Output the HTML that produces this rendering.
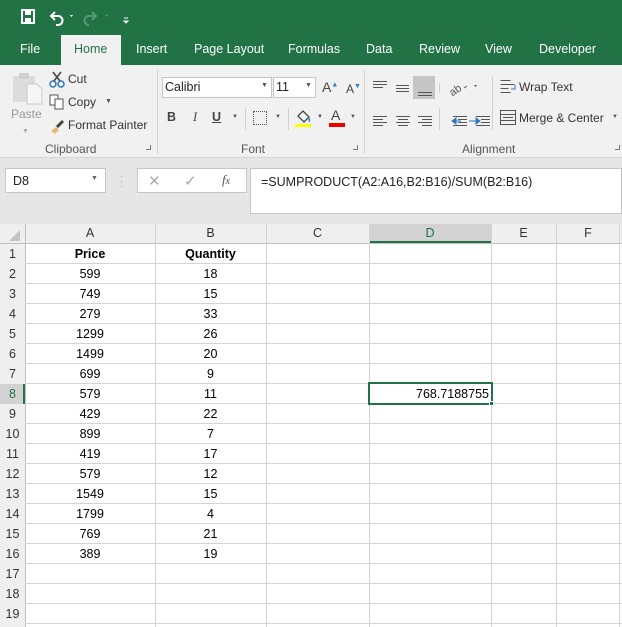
<!DOCTYPE html>
<html><head><style>
*{margin:0;padding:0;box-sizing:border-box}
body{width:622px;height:627px;overflow:hidden;background:#fff;font-family:"Liberation Sans",sans-serif;position:relative;font-size:12px;color:#222}
.a{position:absolute}
.tab{position:absolute;top:42px;color:#fff;font-size:12.5px}
.rb{color:#333;font-size:12px}
.grp{position:absolute;top:142px;font-size:12px;color:#555}
.vs{position:absolute;top:70px;width:1px;height:84px;background:#d6d6d6}
.cell{position:absolute;height:20px;line-height:20px;text-align:center;font-family:"Liberation Sans",sans-serif;font-size:12.5px;color:#000}
.rh{position:absolute;left:0;width:25px;height:20px;line-height:20px;text-align:center;font-size:12.5px;color:#333;background:#efefef}
.hl{position:absolute;left:0;width:622px;height:1px;background:#d4d4d4}
.vl{position:absolute;top:224px;width:1px;height:403px;background:#d4d4d4}
.ch{position:absolute;top:224px;height:19px;line-height:19px;text-align:center;font-size:12.5px;color:#333;background:#efefef}
</style></head><body>
<div class="a" style="left:0;top:0;width:622px;height:65px;background:#217346"></div>
<svg class="a" style="left:20px;top:8px" width="120" height="20">
<rect x="2" y="2" width="12" height="13" fill="none" stroke="#fff" stroke-width="2"/><rect x="5" y="3" width="6" height="4" fill="#fff"/><rect x="5" y="10" width="6" height="4" fill="#fff"/>
<path d="M35 4 l-4 4 4 4 M31 8 h7 a4.5 4.5 0 0 1 0 9 h-2" fill="none" stroke="#fff" stroke-width="2"/>
<path d="M50 7 l3 0 -1.5 2z" fill="#fff"/>
<path d="M72 4 l4 4 -4 4 M76 8 h-7 a4.5 4.5 0 0 0 0 9" fill="none" stroke="#5a9a76" stroke-width="2"/>
<path d="M85 7 l3 0 -1.5 2z" fill="#5a9a76"/>
<path d="M104 10 h4 M104 13 l2 2 2 -2z" stroke="#fff" fill="#fff"/>
</svg>
<div class="a" style="left:61px;top:35px;width:60px;height:30px;background:#f1f1f1"></div>
<div class="tab" style="left:20px">File</div>
<div class="tab" style="left:74px;color:#217346">Home</div>
<div class="tab" style="left:136px">Insert</div>
<div class="tab" style="left:194px">Page Layout</div>
<div class="tab" style="left:288px">Formulas</div>
<div class="tab" style="left:366px">Data</div>
<div class="tab" style="left:419px">Review</div>
<div class="tab" style="left:485px">View</div>
<div class="tab" style="left:539px">Developer</div>
<div class="a" style="left:0;top:65px;width:622px;height:92px;background:#f1f1f1"></div>
<div class="a" style="left:0;top:157px;width:622px;height:1px;background:#d5d5d5"></div>
<div class="a" style="left:0;top:158px;width:622px;height:66px;background:#e6e6e6"></div>
<svg class="a" style="left:10px;top:72px" width="34" height="34"><rect x="3" y="4" width="22" height="26" fill="#dcdcdc"/><rect x="9" y="1" width="10" height="6" fill="#cfcfcf"/><path d="M17 12 h10 l5 5 v15 h-15z" fill="#f6f6f6" stroke="#c8c8c8"/></svg>
<div class="a rb" style="left:11px;top:107px;color:#999">Paste</div>
<div class="a" style="left:22px;top:128px;color:#aaa;font-size:7px">▼</div>
<svg class="a" style="left:49px;top:71px" width="16" height="66"><circle cx="4" cy="13" r="3" fill="none" stroke="#2b79c0" stroke-width="1.5"/><circle cx="12" cy="13" r="3" fill="none" stroke="#2b79c0" stroke-width="1.5"/><path d="M4 1 L11 10 M12 1 L5 10" stroke="#444" stroke-width="1.5"/><rect x="1" y="24" width="8" height="10" fill="#fff" stroke="#555"/><rect x="6" y="28" width="8" height="10" fill="#fff" stroke="#555"/><path d="M2 60 l5-4 3 3 -4 4z" fill="#e8b86a"/><path d="M8 56 l6-6" stroke="#444" stroke-width="3"/></svg>
<div class="a rb" style="left:68px;top:72px">Cut</div>
<div class="a rb" style="left:68px;top:95px">Copy</div>
<div class="a" style="left:105px;top:98px;font-size:7px;color:#555">▼</div>
<div class="a rb" style="left:68px;top:118px">Format Painter</div>
<div class="grp" style="left:45px">Clipboard</div>
<div class="a" style="left:146px;top:145px;width:5px;height:5px;border-right:1px solid #777;border-bottom:1px solid #777"></div>
<div class="vs" style="left:157px"></div>
<div class="a" style="left:162px;top:77px;width:110px;height:21px;background:#fff;border:1px solid #c6c6c6;font-size:12.5px;padding:2px 2px;line-height:15px">Calibri</div>
<div class="a" style="left:261px;top:82px;font-size:7px;color:#555">▼</div>
<div class="a" style="left:273px;top:77px;width:43px;height:21px;background:#fff;border:1px solid #c6c6c6;font-size:12.5px;padding:2px 2px;line-height:15px">11</div>
<div class="a" style="left:305px;top:82px;font-size:7px;color:#555">▼</div>
<div class="a" style="left:322px;top:79px;font-size:14px;color:#444">A<sup style="font-size:7px;color:#2b79c0">▲</sup></div>
<div class="a" style="left:346px;top:82px;font-size:12px;color:#444">A<sup style="font-size:7px;color:#2b79c0">▼</sup></div>
<div class="a" style="left:167px;top:110px;font-weight:bold;font-size:12.5px;color:#444">B</div>
<div class="a" style="left:193px;top:110px;font-style:italic;font-size:12.5px;color:#444;font-family:'Liberation Serif',serif">I</div>
<div class="a" style="left:212px;top:110px;text-decoration:underline;font-size:12.5px;color:#444;font-weight:bold">U</div>
<div class="a" style="left:232px;top:114px;font-size:6px;color:#555">▼</div>
<div class="a" style="left:245px;top:108px;width:1px;height:22px;background:#d0d0d0"></div>
<div class="a" style="left:253px;top:111px;width:14px;height:14px;border:1px dotted #555"></div>
<div class="a" style="left:275px;top:114px;font-size:6px;color:#555">▼</div>
<div class="a" style="left:288px;top:108px;width:1px;height:22px;background:#d0d0d0"></div>
<svg class="a" style="left:294px;top:108px" width="20" height="20"><path d="M4 8 l5-5 6 6 -5 5z" fill="none" stroke="#444" stroke-width="1.3"/><path d="M14 9 q3 3 1 5" fill="#2b79c0" stroke="#2b79c0"/><rect x="1" y="16" width="16" height="3" fill="#ffff00"/></svg>
<div class="a" style="left:317px;top:114px;font-size:6px;color:#555">▼</div>
<div class="a" style="left:331px;top:107px;font-size:14px;color:#444">A</div>
<div class="a" style="left:329px;top:123px;width:16px;height:4px;background:#e00"></div>
<div class="a" style="left:350px;top:114px;font-size:6px;color:#555">▼</div>
<div class="grp" style="left:241px">Font</div>
<div class="a" style="left:353px;top:145px;width:5px;height:5px;border-right:1px solid #777;border-bottom:1px solid #777"></div>
<div class="vs" style="left:364px"></div>
<div class="a" style="left:413px;top:76px;width:22px;height:23px;background:#c6c6c6"></div>
<svg class="a" style="left:370px;top:76px" width="130" height="60">
<g stroke="#555" stroke-width="1"><path d="M3 5.5h14M3 8.5h14M3 11.5h10"/><path d="M26 9.5h13M26 12.5h13M26 15.5h13"/><path d="M48 16.5h14M48 19.5h14"/>
<path d="M3 40.5h14M3 43.5h10M3 46.5h14M3 49.5h10"/><path d="M26 40.5h14M28 43.5h10M26 46.5h14M28 49.5h10"/><path d="M48 40.5h14M52 43.5h10M48 46.5h14M52 49.5h10"/>
<path d="M83 40.5h14M88 43.5h9M88 46.5h9M83 49.5h14"/><path d="M106 40.5h14M111 43.5h9M111 46.5h9M106 49.5h14"/></g>
<path d="M82 45 l4-3 v6z M86 45h5" fill="#2b79c0" stroke="#2b79c0"/><path d="M110 45 l-4-3 v6z M99 45h7" fill="#2b79c0" stroke="#2b79c0"/>
<text x="78" y="17" font-size="11" fill="#555" transform="rotate(-35 86 12)" font-family="Liberation Sans">ab</text><path d="M94 12 l3-2" stroke="#555"/>
<path d="M104 9 l3 0 -1.5 2z" fill="#555"/>
</svg>
<div class="a" style="left:439px;top:83px;width:1px;height:10px;background:#d0d0d0"></div>
<div class="a" style="left:439px;top:108px;width:1px;height:22px;background:#d0d0d0"></div>
<div class="a" style="left:492px;top:76px;width:1px;height:54px;background:#d0d0d0"></div>
<svg class="a" style="left:499px;top:78px" width="20" height="50"><g stroke="#555" fill="none"><path d="M1.5 2.5h10M1.5 6.5h14M1.5 10.5h8M1.5 14.5h10"/><path d="M16 7 v4 h-4" stroke="#2b79c0"/><rect x="1.5" y="32.5" width="15" height="14"/><path d="M1.5 36.5h15M1.5 42.5h15M4 39.5h10"/></g></svg>
<div class="a rb" style="left:519px;top:80px">Wrap Text</div>
<div class="a rb" style="left:519px;top:111px">Merge &amp; Center</div>
<div class="a" style="left:612px;top:114px;font-size:6px;color:#555">▼</div>
<div class="grp" style="left:462px">Alignment</div>
<div class="a" style="left:615px;top:145px;width:5px;height:5px;border-right:1px solid #777;border-bottom:1px solid #777"></div>
<div class="a" style="left:5px;top:168px;width:101px;height:25px;background:#fff;border:1px solid #c6c6c6;padding:5px 7px;font-size:12.5px">D8</div>
<div class="a" style="left:91px;top:175px;font-size:7px;color:#666">▼</div>
<div class="a" style="left:120px;top:174px;color:#aaa;font-size:10px;line-height:5px">·<br>·<br>·</div>
<div class="a" style="left:137px;top:168px;width:110px;height:25px;background:#fff;border:1px solid #c6c6c6"></div>
<div class="a" style="left:148px;top:172px;color:#aaa;font-size:15px">✕</div>
<div class="a" style="left:184px;top:172px;color:#aaa;font-size:15px">✓</div>
<div class="a" style="left:222px;top:172px;color:#555;font-size:13px;font-style:italic;font-family:'Liberation Serif',serif">f<span style="font-size:10px">x</span></div>
<div class="a" style="left:250px;top:168px;width:372px;height:46px;background:#fff;border:1px solid #c6c6c6;padding:6px 10px;font-size:12.5px;color:#222">=SUMPRODUCT(A2:A16,B2:B16)/SUM(B2:B16)</div>
<div class="a" style="left:0;top:224px;width:622px;height:19px;background:#efefef"></div>
<svg class="a" style="left:6px;top:228px" width="16" height="14"><path d="M14 2 V13 H3z" fill="#c3c3c3"/></svg>
<div class="ch" style="left:25px;width:130px">A</div>
<div class="ch" style="left:155px;width:111px">B</div>
<div class="ch" style="left:266px;width:103px">C</div>
<div class="ch" style="left:369px;width:122px;background:#d2d2d2;color:#217346">D</div>
<div class="ch" style="left:491px;width:65px">E</div>
<div class="ch" style="left:556px;width:64px">F</div>
<div class="a" style="left:369px;top:241px;width:122px;height:2px;background:#217346"></div>
<div class="a" style="left:0;top:243px;width:25px;height:384px;background:#efefef"></div>
<div class="a" style="left:0;top:243px;width:622px;height:1px;background:#c0c0c0"></div>
<div class="a" style="left:25px;top:224px;width:1px;height:403px;background:#c0c0c0"></div>
<div class="vl" style="left:155px"></div><div class="vl" style="left:266px"></div><div class="vl" style="left:369px"></div><div class="vl" style="left:491px"></div><div class="vl" style="left:556px"></div><div class="vl" style="left:619px"></div>
<div class="hl" style="top:263px"></div><div class="hl" style="top:283px"></div><div class="hl" style="top:303px"></div><div class="hl" style="top:323px"></div><div class="hl" style="top:343px"></div><div class="hl" style="top:363px"></div><div class="hl" style="top:383px"></div><div class="hl" style="top:403px"></div><div class="hl" style="top:423px"></div><div class="hl" style="top:443px"></div><div class="hl" style="top:463px"></div><div class="hl" style="top:483px"></div><div class="hl" style="top:503px"></div><div class="hl" style="top:523px"></div><div class="hl" style="top:543px"></div><div class="hl" style="top:563px"></div><div class="hl" style="top:583px"></div><div class="hl" style="top:603px"></div><div class="hl" style="top:623px"></div>
<div class="rh" style="top:244px">1</div><div class="rh" style="top:264px">2</div><div class="rh" style="top:284px">3</div><div class="rh" style="top:304px">4</div><div class="rh" style="top:324px">5</div><div class="rh" style="top:344px">6</div><div class="rh" style="top:364px">7</div><div class="rh" style="top:384px;background:#d2d2d2;color:#217346">8</div><div class="rh" style="top:404px">9</div><div class="rh" style="top:424px">10</div><div class="rh" style="top:444px">11</div><div class="rh" style="top:464px">12</div><div class="rh" style="top:484px">13</div><div class="rh" style="top:504px">14</div><div class="rh" style="top:524px">15</div><div class="rh" style="top:544px">16</div><div class="rh" style="top:564px">17</div><div class="rh" style="top:584px">18</div><div class="rh" style="top:604px">19</div>
<div class="a" style="left:23px;top:384px;width:2px;height:20px;background:#217346"></div>
<div class="cell" style="left:25px;width:130px;top:244px;font-weight:bold">Price</div>
<div class="cell" style="left:155px;width:111px;top:244px;font-weight:bold">Quantity</div>
<div class="cell" style="left:25px;width:130px;top:264px">599</div><div class="cell" style="left:155px;width:111px;top:264px">18</div>
<div class="cell" style="left:25px;width:130px;top:284px">749</div><div class="cell" style="left:155px;width:111px;top:284px">15</div>
<div class="cell" style="left:25px;width:130px;top:304px">279</div><div class="cell" style="left:155px;width:111px;top:304px">33</div>
<div class="cell" style="left:25px;width:130px;top:324px">1299</div><div class="cell" style="left:155px;width:111px;top:324px">26</div>
<div class="cell" style="left:25px;width:130px;top:344px">1499</div><div class="cell" style="left:155px;width:111px;top:344px">20</div>
<div class="cell" style="left:25px;width:130px;top:364px">699</div><div class="cell" style="left:155px;width:111px;top:364px">9</div>
<div class="cell" style="left:25px;width:130px;top:384px">579</div><div class="cell" style="left:155px;width:111px;top:384px">11</div>
<div class="cell" style="left:25px;width:130px;top:404px">429</div><div class="cell" style="left:155px;width:111px;top:404px">22</div>
<div class="cell" style="left:25px;width:130px;top:424px">899</div><div class="cell" style="left:155px;width:111px;top:424px">7</div>
<div class="cell" style="left:25px;width:130px;top:444px">419</div><div class="cell" style="left:155px;width:111px;top:444px">17</div>
<div class="cell" style="left:25px;width:130px;top:464px">579</div><div class="cell" style="left:155px;width:111px;top:464px">12</div>
<div class="cell" style="left:25px;width:130px;top:484px">1549</div><div class="cell" style="left:155px;width:111px;top:484px">15</div>
<div class="cell" style="left:25px;width:130px;top:504px">1799</div><div class="cell" style="left:155px;width:111px;top:504px">4</div>
<div class="cell" style="left:25px;width:130px;top:524px">769</div><div class="cell" style="left:155px;width:111px;top:524px">21</div>
<div class="cell" style="left:25px;width:130px;top:544px">389</div><div class="cell" style="left:155px;width:111px;top:544px">19</div>
<div class="a" style="left:368px;top:382px;width:125px;height:23px;border:2px solid #217346;background:#fff"></div>
<div class="cell" style="left:369px;width:120px;top:384px;text-align:right">768.7188755</div>
<div class="a" style="left:489px;top:401px;width:5px;height:5px;background:#217346;border:1px solid #fff"></div>
</body></html>
